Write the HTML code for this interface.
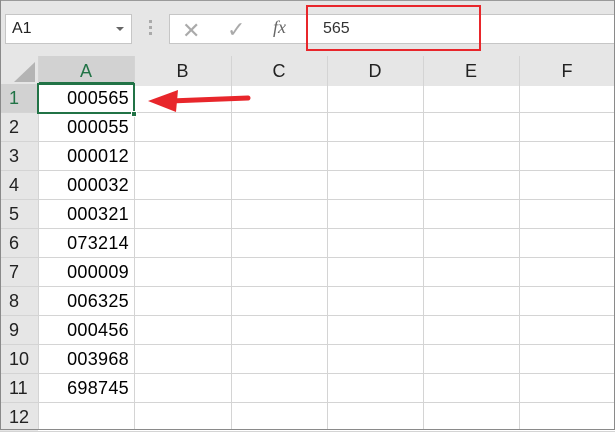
<!DOCTYPE html>
<html><head><style>
body{margin:0;width:615px;height:430px;overflow:hidden;background:#fff;font-family:"Liberation Sans",sans-serif;position:relative}
.a{position:absolute;box-sizing:border-box}
.top{left:0;top:0;width:615px;height:56px;background:#e6e6e6;border-top:1px solid #9a9a9a}
.hdr{background:#e6e6e6;color:#222;font-size:18px;text-align:center;line-height:30px}
.vl{background:#d4d4d4;width:1px}
.hl{background:#d4d4d4;height:1px}
.num{font-size:18px;color:#000;text-align:right;line-height:29px;width:96px;padding-right:5px;letter-spacing:0.3px}
.rn{font-size:18px;color:#222;width:38px;text-align:left;padding-left:9px;line-height:29px;background:#e6e6e6}
</style></head><body>
<div class="a top"></div>
<div class="a" style="left:5px;top:14px;width:127px;height:30px;background:#fff;border:1px solid #c6c6c6;font-size:16px;line-height:28px;padding-left:6px;color:#222">A1</div>
<div class="a" style="left:116px;top:27px;width:0;height:0;border-left:4px solid transparent;border-right:4px solid transparent;border-top:4px solid #666"></div>
<div class="a" style="left:149px;top:20px;width:3px;height:3px;background:#aaa;box-shadow:0 6px 0 #aaa,0 12px 0 #aaa"></div>
<div class="a" style="left:169px;top:14px;width:450px;height:30px;background:#fff;border:1px solid #c6c6c6"></div>
<div class="a" style="left:182px;top:18px;font-size:22px;color:#aaa">✕</div>
<div class="a" style="left:227px;top:17px;font-size:22px;color:#aaa">✓</div>
<div class="a" style="left:273px;top:17px;font-size:18px;color:#666;font-family:'Liberation Serif',serif;font-style:italic">fx</div>
<div class="a" style="left:306px;top:14px;width:1px;height:30px;background:#d0d0d0"></div>
<div class="a" style="left:306px;top:5px;width:175px;height:46px;border:2px solid #e8262b"></div>
<div class="a" style="left:323px;top:20px;font-size:16px;color:#333">565</div>

<div class="a hdr" style="left:0;top:56px;width:615px;height:28px"></div>
<div class="a" style="left:14px;top:62px;width:0;height:0;border-left:21px solid transparent;border-bottom:20px solid #b4b4b4"></div>
<div class="a hdr" style="left:38px;top:56px;width:96px;height:28px;background:#d2d2d2;color:#217346;border-bottom:2px solid #217346">A</div>
<div class="a hdr" style="left:134px;top:56px;width:97px">B</div>
<div class="a hdr" style="left:231px;top:56px;width:96px">C</div>
<div class="a hdr" style="left:327px;top:56px;width:96px">D</div>
<div class="a hdr" style="left:423px;top:56px;width:96px">E</div>
<div class="a hdr" style="left:519px;top:56px;width:96px">F</div>

<div class="a" style="left:0;top:84px;width:38px;height:346px;background:#e6e6e6"></div>
<div id="g"></div>
<script>
var v=["000565","000055","000012","000032","000321","073214","000009","006325","000456","003968","698745",""];
var h="";
[38,134,231,327,423,519].forEach(function(x){h+='<div class="a vl" style="left:'+x+'px;top:56px;height:374px"></div>';});
for(var i=0;i<12;i++){var y=84+i*29;
h+='<div class="a rn" style="left:0;top:'+y+'px;height:29px;'+(i==0?'background:#d2d2d2;color:#217346;':'')+'">'+(i+1)+'</div>';
h+='<div class="a num" style="left:38px;top:'+y+'px">'+v[i]+'</div>';
h+='<div class="a hl" style="left:0;top:'+(y+28)+'px;width:615px"></div>';}
document.getElementById("g").innerHTML=h;
</script>
<div class="a" style="left:37px;top:83px;width:98px;height:31px;border:2px solid #217346"></div>
<div class="a" style="left:131px;top:111px;width:6px;height:6px;background:#217346;border:1px solid #fff"></div>
<svg class="a" style="left:140px;top:85px" width="115" height="30"><path d="M108 13 L30 16" stroke="#e8262b" stroke-width="5" stroke-linecap="round"/><path d="M8 16 L38 5 L36 27 Z" fill="#e8262b"/></svg>
<div class="a" style="left:0;top:0;width:615px;height:430px;border:1px solid #8a8a8a;border-top:0"></div>
</body></html>
